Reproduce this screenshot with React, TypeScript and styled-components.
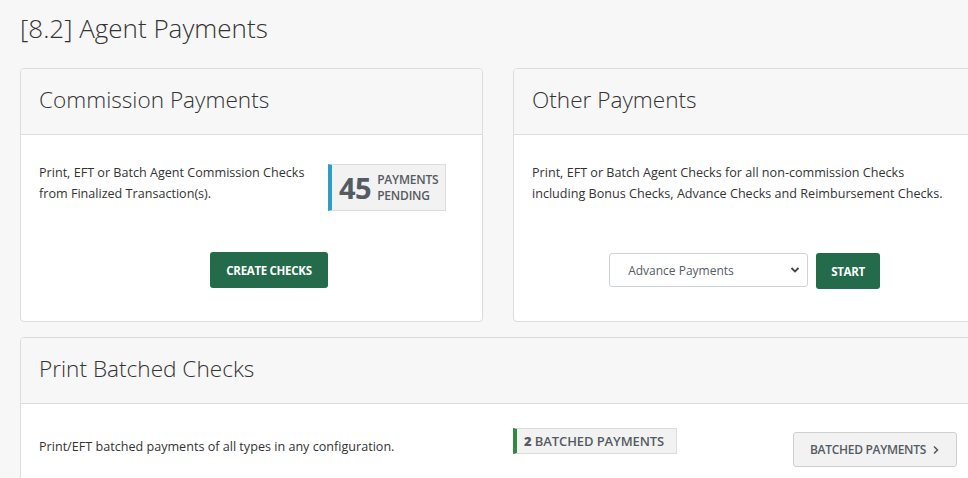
import React, { useState } from "react";
import styled, { createGlobalStyle } from "styled-components";

const GlobalStyle = createGlobalStyle`
    html, body {
        margin: 0;
        padding: 0;
        background: #f7f7f7;
        font-family: "Open Sans", "Noto Sans", sans-serif;
        color: #333;
        overflow: hidden;
    }
`;

const Page = styled.div`
    width: 956px;
    padding: 10px 20px 20px;
`;

const PageTitle = styled.h1`
    margin: 0 0 22px;
    font-size: 26px;
    font-weight: 300;
    line-height: 36px;
    color: #333;
`;

const CardRow = styled.div`
    display: grid;
    grid-template-columns: 463px 463px;
    column-gap: 30px;
    margin-bottom: 15px;
`;

const Card = styled.section`
    background: #fff;
    border: 1px solid #dcdcdc;
    border-radius: 4px;
    overflow: hidden;
`;

const CardHeader = styled.header`
    height: 66px;
    display: flex;
    align-items: center;
    padding: 0 18px 5px;
    box-sizing: border-box;
    background: #f7f7f7;
    border-bottom: 1px solid #dcdcdc;
`;

const CardTitle = styled.h2`
    margin: 0;
    font-size: 22.6px;
    font-weight: 300;
    color: #333;
`;

const CardBody = styled.div<{ $center?: boolean }>`
    padding: 27px 18px 32px;
    display: flex;
    flex-direction: column;
    align-items: ${p => (p.$center ? "center" : "stretch")};
`;

const Description = styled.p`
    margin: 0;
    font-size: 12.6px;
    line-height: 21px;
    color: #333;
    align-self: stretch;
`;

const CommissionGrid = styled.div`
    display: grid;
    grid-template-columns: 271px auto;
    column-gap: 18px;
    row-gap: 40px;
    align-items: start;
`;

const CountBadge = styled.div<{ $accent: string }>`
    display: flex;
    align-items: center;
    gap: 6px;
    width: max-content;
    padding: 0 6px 0 7px;
    background: #f2f2f2;
    border: 1px solid #dcdcdc;
    border-left: 4px solid ${p => p.$accent};
    color: #555b63;
    box-sizing: border-box;
`;

const BigNumber = styled.span`
    font-size: 29px;
    font-weight: 700;
    line-height: 45px;
    letter-spacing: -0.5px;
`;

const BadgeLabel = styled.span`
    font-size: 12px;
    font-weight: 600;
    line-height: 16px;
    text-transform: uppercase;
    letter-spacing: -0.2px;
`;

const InlineBadgeText = styled.span`
    font-size: 13px;
    font-weight: 600;
    line-height: 24px;
    text-transform: uppercase;
    letter-spacing: -0.1px;
`;

const GreenButton = styled.button`
    height: 36px;
    padding: 0 15px;
    border: none;
    border-radius: 3px;
    background: #236b4a;
    color: #fff;
    font-family: inherit;
    font-size: 11.5px;
    font-weight: 700;
    text-transform: uppercase;
    letter-spacing: -0.3px;
    cursor: pointer;
`;

const CreateButton = styled(GreenButton)`
    grid-column: 1;
    justify-self: end;
    width: 118px;
    margin-top: 1px;
    margin-right: -18px;
`;

const StartControls = styled.div`
    display: flex;
    gap: 8px;
    margin-top: 49px;
    align-items: flex-start;
`;

const SelectWrap = styled.div`
    position: relative;
`;

const Select = styled.select`
    appearance: none;
    width: 199px;
    height: 34px;
    padding: 0 30px 0 18px;
    background: #fff;
    border: 1px solid #ced4da;
    border-radius: 3px;
    font-family: inherit;
    font-size: 12px;
    color: #555b63;
`;

const Chevron = styled.svg`
    position: absolute;
    right: 8px;
    top: 13px;
    pointer-events: none;
`;

const BatchGrid = styled.div`
    display: grid;
    grid-template-columns: 444px 237px 1fr;
    column-gap: 30px;
    padding: 24px 18px 20px;
`;

const BatchText = styled(Description)`
    margin-top: 8px;
`;

const BatchButton = styled.button`
    justify-self: end;
    margin-top: 4px;
    height: 35px;
    width: 164px;
    display: flex;
    align-items: center;
    justify-content: center;
    gap: 6px;
    border: 1px solid #cfcfcf;
    border-radius: 3px;
    background: #f2f2f2;
    color: #555b63;
    font-family: inherit;
    font-size: 12px;
    font-weight: 600;
    text-transform: uppercase;
    letter-spacing: -0.3px;
    cursor: pointer;
`;

const App: React.FC = () => {
    const [paymentType, setPaymentType] = useState("advance");

    return (
        <Page>
            <GlobalStyle />
            <PageTitle>[8.2] Agent Payments</PageTitle>
            <CardRow>
                <Card>
                    <CardHeader>
                        <CardTitle>Commission Payments</CardTitle>
                    </CardHeader>
                    <CardBody>
                        <CommissionGrid>
                            <Description>
                                Print, EFT or Batch Agent Commission Checks from Finalized
                                Transaction(s).
                            </Description>
                            <CountBadge $accent="#2a9fc6" style={{ marginTop: 2 }}>
                                <BigNumber>45</BigNumber>
                                <BadgeLabel>
                                    Payments
                                    <br />
                                    Pending
                                </BadgeLabel>
                            </CountBadge>
                            <CreateButton>Create Checks</CreateButton>
                        </CommissionGrid>
                    </CardBody>
                </Card>
                <Card>
                    <CardHeader>
                        <CardTitle>Other Payments</CardTitle>
                    </CardHeader>
                    <CardBody $center>
                        <Description>
                            Print, EFT or Batch Agent Checks for all non-commission Checks
                            including Bonus Checks, Advance Checks and Reimbursement Checks.
                        </Description>
                        <StartControls>
                            <SelectWrap>
                                <Select
                                    value={paymentType}
                                    onChange={e => setPaymentType(e.target.value)}
                                >
                                    <option value="advance">Advance Payments</option>
                                    <option value="bonus">Bonus Payments</option>
                                    <option value="reimbursement">Reimbursements</option>
                                </Select>
                                <Chevron width="10" height="8" viewBox="0 0 10 8">
                                    <path
                                        d="M1.5 2 L5 5.5 L8.5 2"
                                        fill="none"
                                        stroke="#444"
                                        strokeWidth="1.8"
                                    />
                                </Chevron>
                            </SelectWrap>
                            <GreenButton>Start</GreenButton>
                        </StartControls>
                    </CardBody>
                </Card>
            </CardRow>
            <Card>
                <CardHeader>
                    <CardTitle>Print Batched Checks</CardTitle>
                </CardHeader>
                <BatchGrid>
                    <BatchText>
                        Print/EFT batched payments of all types in any configuration.
                    </BatchText>
                    <CountBadge $accent="#2e8b3e" style={{ alignSelf: "start", paddingRight: 12 }}>
                        <InlineBadgeText>
                            <b>2</b> Batched Payments
                        </InlineBadgeText>
                    </CountBadge>
                    <BatchButton>
                        Batched Payments
                        <svg width="8" height="10" viewBox="0 0 8 10">
                            <path
                                d="M2 1.5 L5.5 5 L2 8.5"
                                fill="none"
                                stroke="#555b63"
                                strokeWidth="1.6"
                            />
                        </svg>
                    </BatchButton>
                </BatchGrid>
            </Card>
        </Page>
    );
};

export default App;
